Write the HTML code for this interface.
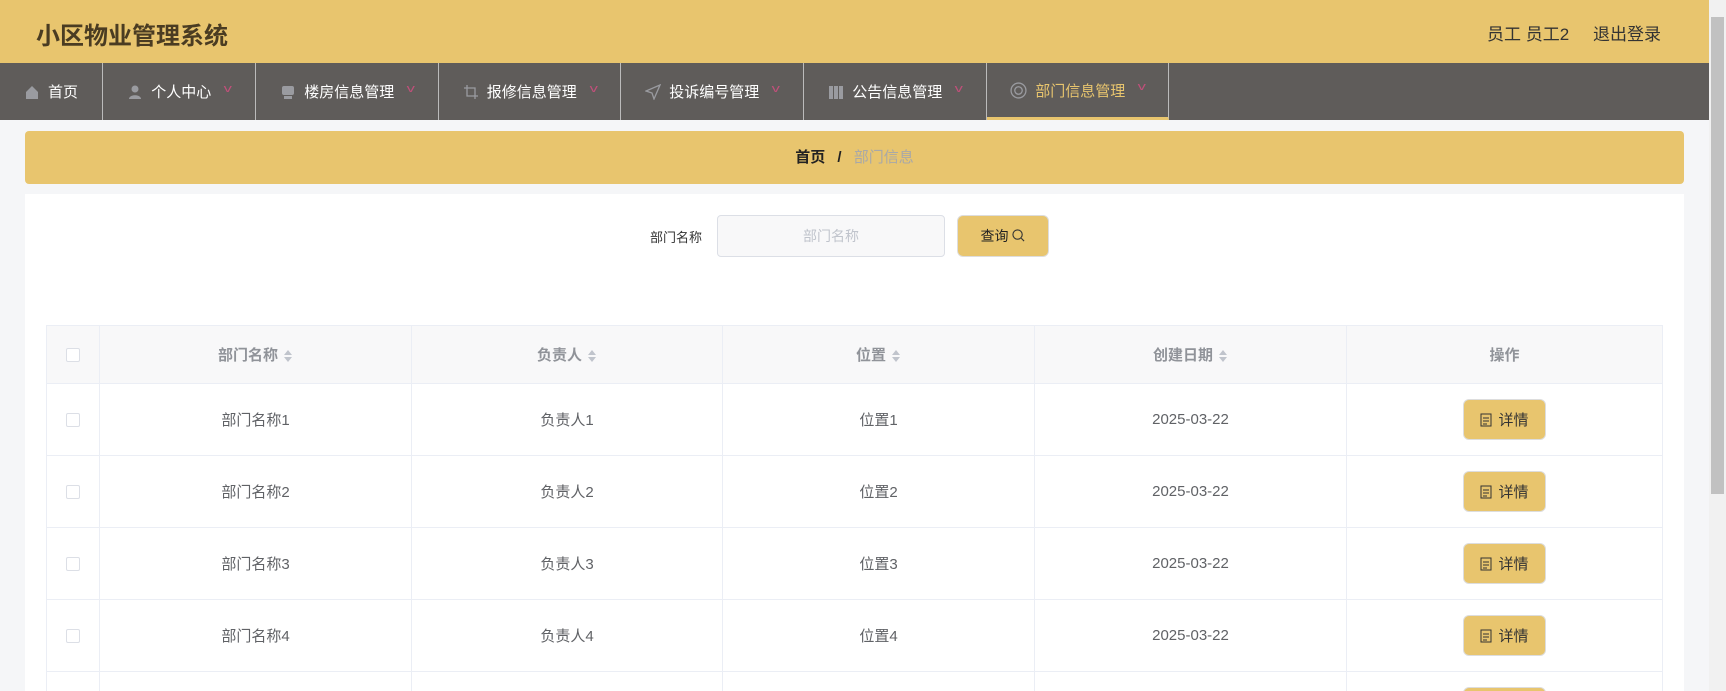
<!DOCTYPE html>
<html><head><meta charset="utf-8"><style>
*{box-sizing:border-box;margin:0;padding:0}
html,body{width:1726px;height:691px;overflow:hidden}
body{background:#f5f6f8;font-family:"Liberation Sans","Noto Sans CJK SC",sans-serif}
#w{position:relative;width:1726px;height:691px;overflow:hidden}
.hd{position:absolute;left:0;top:0;width:1709px;height:63px;background:#e8c56e}
.hd .t{position:absolute;left:36px;top:16px;font-size:24px;font-weight:bold;color:#4a3c22}
.hd .r{position:absolute;top:20px;font-size:17px;color:#333}
.nav{position:absolute;left:0;top:63px;width:1709px;height:57px;background:#5f5c5a}
.ni{position:absolute;top:0;height:57px;border-right:1px solid #bbb;color:#fff;font-size:15px;display:flex;align-items:center;justify-content:center;gap:8px}
.ni .ar{color:#c0507a;font-size:11px;margin-left:6px;transform:scaleX(1.5);margin-top:-6px}
.ni.act{color:#e8c56e;border-bottom:3px solid #e8c56e}
.bc{position:absolute;left:25px;top:131px;width:1659px;height:53px;background:#e8c56e;border-radius:4px;text-align:center;line-height:53px;font-size:15px}
.main{position:absolute;left:25px;top:194px;width:1659px;height:497px;background:#fff}
.lbl{position:absolute;left:650px;top:227px;font-size:13px;color:#333}
.inp{position:absolute;left:717px;top:215px;width:228px;height:42px;border:1px solid #dcdfe6;border-radius:4px;background:#f8f8f9;text-align:center;line-height:40px;color:#c0c4cc;font-size:14px}
.btn{position:absolute;left:957px;top:215px;width:92px;height:42px;border:1px solid #ddd;border-radius:6px;background:#e8c56e;text-align:center;line-height:40px;font-size:14px;color:#222}
table{position:absolute;left:46px;top:325px;width:1617px;border-collapse:collapse;font-size:15px;color:#606266}
td,th{border:1px solid #ebeef5;text-align:center}
th{height:58px;background:#f8f8f9;color:#909399;font-weight:bold}
td{height:72px}
.cb{display:inline-block;width:14px;height:14px;border:1px solid #dcdfe6;border-radius:2px;background:#fff;vertical-align:middle}
.so{display:inline-block;vertical-align:middle;margin-left:5px}
.d{display:inline-flex;align-items:center;gap:6px;justify-content:center;width:83px;height:41px;background:#e8c56e;border:1px solid #ddd;border-radius:6px;color:#333;font-size:15px}
.sb{position:absolute;left:1709px;top:0;width:17px;height:691px;background:#f1f1f1}
.th{position:absolute;left:1711px;top:17px;width:13px;height:477px;background:#c1c1c1}
</style></head><body><div id="w">
<div class="hd"><div class="t">小区物业管理系统</div><div class="r" style="left:1487px">员工 员工2</div><div class="r" style="left:1593px">退出登录</div></div>
<div class="nav">
<div class="ni" style="left:0;width:103px"><svg width="16" height="16" viewBox="0 0 16 16"><path d="M2 8L8 2l6 6v7H2z" fill="#9a9ba0"/></svg>首页</div>
<div class="ni" style="left:103px;width:153px"><svg width="16" height="16" viewBox="0 0 16 16"><circle cx="8" cy="5" r="3.5" fill="#9a9ba0"/><path d="M2 15c0-5 12-5 12 0z" fill="#9a9ba0"/></svg>个人中心<span class="ar">v</span></div>
<div class="ni" style="left:256px;width:183px"><svg width="16" height="16" viewBox="0 0 16 16"><rect x="2" y="2" width="12" height="9" rx="2" fill="#9a9ba0"/><rect x="4" y="12" width="8" height="3" fill="#9a9ba0"/></svg>楼房信息管理<span class="ar">v</span></div>
<div class="ni" style="left:439px;width:182px"><svg width="16" height="16" viewBox="0 0 16 16"><path d="M4 1v11h11M1 4h11v11" fill="none" stroke="#9a9ba0" stroke-width="1.3"/></svg>报修信息管理<span class="ar">v</span></div>
<div class="ni" style="left:621px;width:183px"><svg width="16" height="16" viewBox="0 0 16 16"><path d="M15 1L1 7l6 2 2 6z" fill="none" stroke="#9a9ba0" stroke-width="1.3"/></svg>投诉编号管理<span class="ar">v</span></div>
<div class="ni" style="left:804px;width:183px"><svg width="16" height="16" viewBox="0 0 16 16"><rect x="1" y="2" width="4" height="13" fill="#9a9ba0"/><rect x="6" y="2" width="4" height="13" fill="#9a9ba0"/><path d="M11 2h4v13h-4z" fill="#9a9ba0"/></svg>公告信息管理<span class="ar">v</span></div>
<div class="ni act" style="left:987px;width:182px"><svg width="17" height="17" viewBox="0 0 16 16"><circle cx="8" cy="8" r="7" fill="none" stroke="#9a9ba0" stroke-width="1.2"/><circle cx="8" cy="8" r="3.5" fill="none" stroke="#9a9ba0" stroke-width="1.2"/></svg>部门信息管理<span class="ar">v</span></div>
</div>
<div class="bc"><b style="color:#222">首页</b> <b style="color:#222;margin:0 8px">/</b> <span style="color:#a8a8a8">部门信息</span></div>
<div class="main"></div>
<div class="lbl">部门名称</div>
<div class="inp">部门名称</div>
<div class="btn">查询 <svg width="13" height="13" viewBox="0 0 14 14" style="vertical-align:-1px"><circle cx="6" cy="6" r="5" fill="none" stroke="#333" stroke-width="1.2"/><path d="M10 10l3 3" stroke="#333" stroke-width="1.2"/></svg></div>
<table>
<tr><th style="width:53px"><span class="cb"></span></th><th style="width:312px">部门名称<svg class="so" width="10" height="14" viewBox="0 0 10 14"><path d="M5 1l4 5H1zM5 13l4-5H1z" fill="#c0c4cc"/></svg></th><th style="width:311px">负责人<svg class="so" width="10" height="14" viewBox="0 0 10 14"><path d="M5 1l4 5H1zM5 13l4-5H1z" fill="#c0c4cc"/></svg></th><th style="width:312px">位置<svg class="so" width="10" height="14" viewBox="0 0 10 14"><path d="M5 1l4 5H1zM5 13l4-5H1z" fill="#c0c4cc"/></svg></th><th style="width:312px">创建日期<svg class="so" width="10" height="14" viewBox="0 0 10 14"><path d="M5 1l4 5H1zM5 13l4-5H1z" fill="#c0c4cc"/></svg></th><th>操作</th></tr>
<tr><td><span class="cb"></span></td><td>部门名称1</td><td>负责人1</td><td>位置1</td><td>2025-03-22</td><td><span class="d"><svg width="12" height="14" viewBox="0 0 12 14"><rect x="1" y="1" width="10" height="12" fill="none" stroke="#333"/><path d="M3 5h6M3 8h6M3 11h4" stroke="#333"/></svg>详情</span></td></tr>
<tr><td><span class="cb"></span></td><td>部门名称2</td><td>负责人2</td><td>位置2</td><td>2025-03-22</td><td><span class="d"><svg width="12" height="14" viewBox="0 0 12 14"><rect x="1" y="1" width="10" height="12" fill="none" stroke="#333"/><path d="M3 5h6M3 8h6M3 11h4" stroke="#333"/></svg>详情</span></td></tr>
<tr><td><span class="cb"></span></td><td>部门名称3</td><td>负责人3</td><td>位置3</td><td>2025-03-22</td><td><span class="d"><svg width="12" height="14" viewBox="0 0 12 14"><rect x="1" y="1" width="10" height="12" fill="none" stroke="#333"/><path d="M3 5h6M3 8h6M3 11h4" stroke="#333"/></svg>详情</span></td></tr>
<tr><td><span class="cb"></span></td><td>部门名称4</td><td>负责人4</td><td>位置4</td><td>2025-03-22</td><td><span class="d"><svg width="12" height="14" viewBox="0 0 12 14"><rect x="1" y="1" width="10" height="12" fill="none" stroke="#333"/><path d="M3 5h6M3 8h6M3 11h4" stroke="#333"/></svg>详情</span></td></tr>
<tr><td><span class="cb"></span></td><td>部门名称5</td><td>负责人5</td><td>位置5</td><td>2025-03-22</td><td><span class="d"><svg width="12" height="14" viewBox="0 0 12 14"><rect x="1" y="1" width="10" height="12" fill="none" stroke="#333"/><path d="M3 5h6M3 8h6M3 11h4" stroke="#333"/></svg>详情</span></td></tr>
</table>
<div class="sb"></div><div class="th"></div>
</div></body></html>
